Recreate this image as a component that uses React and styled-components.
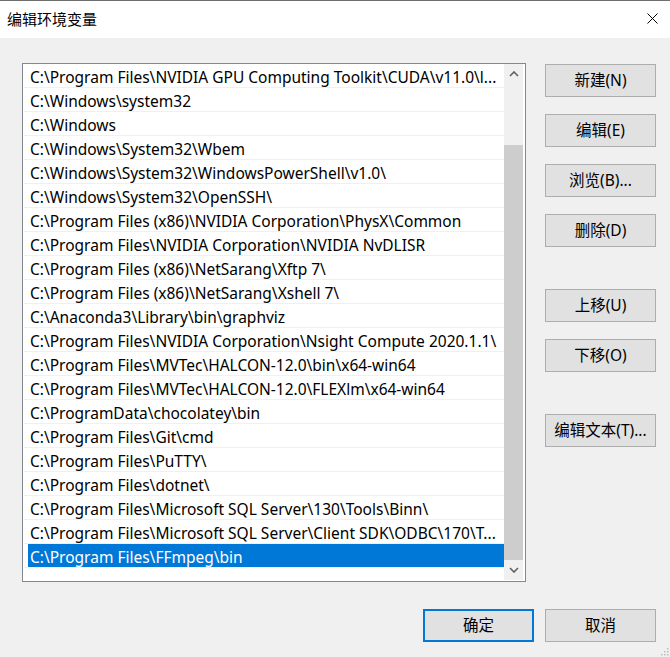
import React from "react"
import styled, { createGlobalStyle } from "styled-components"

const GlobalStyle = createGlobalStyle`
  html, body {
    margin: 0;
    padding: 0;
    background: #f0f0f0;
  }
  body {
    font-family: "Noto Sans", "Noto Sans CJK SC", sans-serif;
    font-size: 15.5px;
    color: #000;
  }
`

const Window = styled.div`
  position: relative;
  width: 670px;
  height: 657px;
  display: flex;
  flex-direction: column;
  background: #f0f0f0;
  border-top: 1px solid #6f6f6f;
  box-sizing: border-box;
  overflow: hidden;
`

const TitleBar = styled.div`
  height: 37px;
  background: #fff;
  display: flex;
  align-items: center;
  justify-content: space-between;
  padding: 0 12px 0 7px;
  flex-shrink: 0;
`

const Title = styled.span`
  font-family: "Noto Sans CJK SC", sans-serif;
  font-size: 15px;
  line-height: 1;
  margin-top: -2px;
`

const CloseIcon = styled.svg`
  width: 11px;
  height: 11px;
  margin-top: -3px;
`

const Body = styled.div`
  flex: 1;
  display: flex;
  flex-direction: column;
  padding: 25px 14px 0 22px;
`

const Main = styled.div`
  display: flex;
  gap: 19px;
`

const ListBox = styled.div`
  width: 504px;
  height: 519px;
  box-sizing: border-box;
  border: 1px solid #828790;
  background: #fff;
  display: flex;
  padding: 0 1px 0 1px;
`

const Rows = styled.div`
  flex: 1;
  display: flex;
  flex-direction: column;
  min-width: 0;
`

const Row = styled.div`
  height: 24px;
  box-sizing: border-box;
  border-bottom: 1px solid #f0f0f0;
  padding-left: 4px;
  display: flex;
`

const RowText = styled.div`
  flex: 1;
  min-width: 0;
  height: 23px;
  box-sizing: border-box;
  padding: 3px 0 0 2px;
  line-height: 20px;
  white-space: nowrap;
  overflow: hidden;
  background: ${(p) => (p.$selected ? "#0078d7" : "transparent")};
  color: ${(p) => (p.$selected ? "#fff" : "#000")};
`

const ScrollBar = styled.div`
  width: 19px;
  margin-right: 1px;
  background: #f0f0f0;
  display: flex;
  flex-direction: column;
  align-self: stretch;
  margin-bottom: 1px;
`

const ArrowBtn = styled.div`
  height: 20px;
  display: flex;
  align-items: center;
  justify-content: center;
  flex-shrink: 0;
`

const Track = styled.div`
  flex: 1;
  display: flex;
  flex-direction: column;
  padding-top: 61px;
`

const Thumb = styled.div`
  flex: 1;
  background: #cdcdcd;
`

const ButtonColumn = styled.div`
  display: flex;
  flex-direction: column;
  padding-top: 1px;
`

const Button = styled.button`
  width: 111px;
  height: 33px;
  box-sizing: border-box;
  background: #e1e1e1;
  border: ${(p) => (p.$primary ? "2px solid #0078d7" : "1px solid #adadad")};
  font-family: "Noto Sans", "Noto Sans CJK SC", sans-serif;
  font-size: 15.5px;
  color: #000;
  padding: 0 0 3px;
  margin-top: ${(p) => p.$gap || 0}px;
  cursor: default;
`

const Footer = styled.div`
  display: flex;
  justify-content: flex-end;
  gap: 11px;
  margin-top: 27px;
`

const Grip = styled.svg`
  position: absolute;
  right: 1px;
  bottom: 1px;
  width: 10px;
  height: 10px;
`

const paths = [
  "C:\\Program Files\\NVIDIA GPU Computing Toolkit\\CUDA\\v11.0\\l...",
  "C:\\Windows\\system32",
  "C:\\Windows",
  "C:\\Windows\\System32\\Wbem",
  "C:\\Windows\\System32\\WindowsPowerShell\\v1.0\\",
  "C:\\Windows\\System32\\OpenSSH\\",
  "C:\\Program Files (x86)\\NVIDIA Corporation\\PhysX\\Common",
  "C:\\Program Files\\NVIDIA Corporation\\NVIDIA NvDLISR",
  "C:\\Program Files (x86)\\NetSarang\\Xftp 7\\",
  "C:\\Program Files (x86)\\NetSarang\\Xshell 7\\",
  "C:\\Anaconda3\\Library\\bin\\graphviz",
  "C:\\Program Files\\NVIDIA Corporation\\Nsight Compute 2020.1.1\\",
  "C:\\Program Files\\MVTec\\HALCON-12.0\\bin\\x64-win64",
  "C:\\Program Files\\MVTec\\HALCON-12.0\\FLEXlm\\x64-win64",
  "C:\\ProgramData\\chocolatey\\bin",
  "C:\\Program Files\\Git\\cmd",
  "C:\\Program Files\\PuTTY\\",
  "C:\\Program Files\\dotnet\\",
  "C:\\Program Files\\Microsoft SQL Server\\130\\Tools\\Binn\\",
  "C:\\Program Files\\Microsoft SQL Server\\Client SDK\\ODBC\\170\\T...",
  "C:\\Program Files\\FFmpeg\\bin",
]

const Chevron = ({ up }) => (
  <svg width="10" height="6" viewBox="0 0 10 6">
    <path
      d={up ? "M1 5 L5 1 L9 5" : "M1 1 L5 5 L9 1"}
      fill="none"
      stroke="#606060"
      strokeWidth="1.6"
    />
  </svg>
)

export default function App() {
  const selected = paths.length - 1

  return (
    <>
      <GlobalStyle />
      <Window>
        <TitleBar>
          <Title>编辑环境变量</Title>
          <CloseIcon viewBox="0 0 11 11">
            <path d="M0.5 0.5 L10.5 10.5 M10.5 0.5 L0.5 10.5" stroke="#000" strokeWidth="1" />
          </CloseIcon>
        </TitleBar>
        <Body>
          <Main>
            <ListBox>
              <Rows>
                {paths.map((p, i) => (
                  <Row key={i}>
                    <RowText $selected={i === selected}>{p}</RowText>
                  </Row>
                ))}
              </Rows>
              <ScrollBar>
                <ArrowBtn>
                  <Chevron up />
                </ArrowBtn>
                <Track>
                  <Thumb />
                </Track>
                <ArrowBtn>
                  <Chevron />
                </ArrowBtn>
              </ScrollBar>
            </ListBox>
            <ButtonColumn>
              <Button>新建(N)</Button>
              <Button $gap={17}>编辑(E)</Button>
              <Button $gap={17}>浏览(B)...</Button>
              <Button $gap={17}>删除(D)</Button>
              <Button $gap={42}>上移(U)</Button>
              <Button $gap={17}>下移(O)</Button>
              <Button $gap={42}>编辑文本(T)...</Button>
            </ButtonColumn>
          </Main>
          <Footer>
            <Button $primary>确定</Button>
            <Button>取消</Button>
          </Footer>
        </Body>
        <Grip viewBox="0 0 10 10">
          {[[8, 2], [8, 5], [5, 5], [8, 8], [5, 8], [2, 8]].map(([x, y], i) => (
            <rect key={i} x={x} y={y} width="1.5" height="1.5" fill="#bcbcbc" />
          ))}
        </Grip>
      </Window>
    </>
  )
}
